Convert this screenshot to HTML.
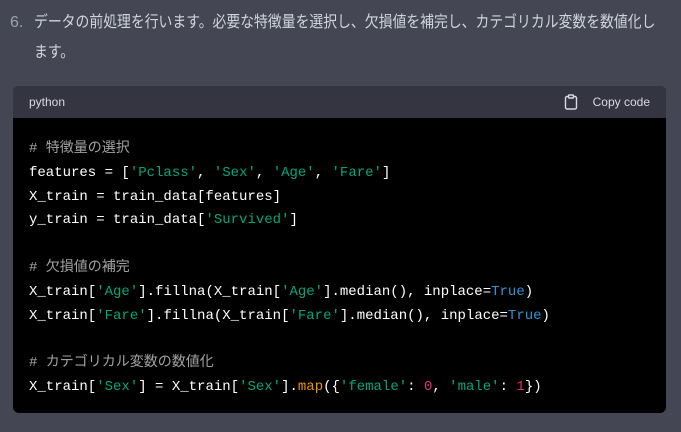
<!DOCTYPE html>
<html><head><meta charset="utf-8"><style>
html,body{margin:0;padding:0;}
body{width:681px;height:432px;background:#444654;overflow:hidden;position:relative;font-family:"Liberation Sans","Noto Sans CJK JP",sans-serif;}
.p{position:absolute;left:34px;top:8px;color:#d1d5db;font-size:16px;line-height:30px;white-space:nowrap;transform:scaleX(0.865);transform-origin:0 0;}
.n{position:absolute;left:10px;top:8px;color:#9ca3af;font-size:16px;line-height:30px;}
.blk{position:absolute;left:13px;top:86px;width:653px;height:327px;border-radius:6px;overflow:hidden;background:#000;}
.hd{height:32px;background:#343541;color:#d9d9e3;font-size:12px;position:relative;}
.hd .l{position:absolute;left:16px;top:9px;}
.hd .r{position:absolute;right:16px;top:9px;}
.hd svg{position:absolute;right:88px;top:8px;}
pre{margin:0;position:absolute;left:16px;top:52px;font-family:"Liberation Mono","Noto Sans CJK JP",monospace;font-size:14px;line-height:23.8px;color:#fff;}
.c{color:#ffffffa0}.s{color:#00a67d}.b{color:#2e95d3}.m{color:#e9950c}.k{color:#df3079}
</style></head><body>
<div class="n">6.</div>
<div class="p">データの前処理を行います。必要な特徴量を選択し、欠損値を補完し、カテゴリカル変数を数値化し<br>ます。</div>
<div class="blk">
<div class="hd"><span class="l">python</span>
<svg width="14" height="16" viewBox="0 0 14 16" fill="none" stroke="#d9d9e3" stroke-width="1.4"><rect x="1.5" y="2.5" width="11" height="12.5" rx="1.5"/><rect x="4.5" y="1" width="5" height="3" rx="0.8" fill="#343541"/></svg>
<span class="r">Copy code</span></div>
<pre><span class="c"># 特徴量の選択</span>
features = [<span class="s">'Pclass'</span>, <span class="s">'Sex'</span>, <span class="s">'Age'</span>, <span class="s">'Fare'</span>]
X_train = train_data[features]
y_train = train_data[<span class="s">'Survived'</span>]

<span class="c"># 欠損値の補完</span>
X_train[<span class="s">'Age'</span>].fillna(X_train[<span class="s">'Age'</span>].median(), inplace=<span class="b">True</span>)
X_train[<span class="s">'Fare'</span>].fillna(X_train[<span class="s">'Fare'</span>].median(), inplace=<span class="b">True</span>)

<span class="c"># カテゴリカル変数の数値化</span>
X_train[<span class="s">'Sex'</span>] = X_train[<span class="s">'Sex'</span>].<span class="m">map</span>({<span class="s">'female'</span>: <span class="k">0</span>, <span class="s">'male'</span>: <span class="k">1</span>})</pre>
</div>
</body></html>
